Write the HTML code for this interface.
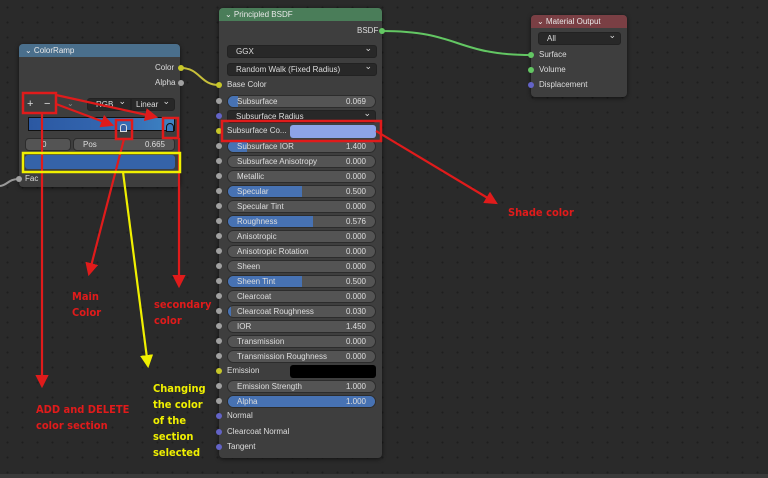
<!DOCTYPE html>
<html><head><meta charset="utf-8"><style>
*{margin:0;padding:0;box-sizing:border-box}
body{width:768px;height:478px;overflow:hidden;background:#282828;font-family:"Liberation Sans",sans-serif;font-size:8px;color:#ddd;position:relative;
background-image:radial-gradient(circle,#1e1e1e 0.8px,transparent 1.2px);background-size:15px 15px;background-color:#2a2a2a}
.a{position:absolute}
.node{position:absolute;background:#3e3e3e;border-radius:4px;box-shadow:0 1px 4px rgba(0,0,0,.6)}
.hd{position:absolute;left:0;right:0;top:0;height:13px;border-radius:4px 4px 0 0;padding-left:6px;line-height:13px;font-size:8px;color:#e8e8e8}
.f{position:absolute;height:13px;border-radius:7px;background:#545454;border:1px solid #2c2c2c;overflow:hidden;line-height:11px;font-size:8px;color:#ddd}
.f .fill{position:absolute;left:0;top:0;bottom:0;background:#4772b3}
.f .l{position:absolute;left:9px}
.f .r{position:absolute;right:9px}
.dd{position:absolute;height:13px;border-radius:3px;background:#282828;border:1px solid #222;line-height:11px;padding-left:8px;color:#ddd}
.dd:after{content:"⌄";position:absolute;right:4px;top:-3px;font-size:9px}
.s{position:absolute;width:6px;height:6px;border-radius:3px;background:#a1a1a1}
.t{position:absolute;color:#ddd;font-size:8px;line-height:10px}
.an{position:absolute;font-family:"DejaVu Sans Condensed","DejaVu Sans",sans-serif;font-stretch:condensed;font-weight:bold;font-size:11px;line-height:16px;color:#e01b1b}
</style></head><body>
<div class="a" style="left:0;top:474px;width:768px;height:4px;background:#3a3a3a"></div>

<svg class="a" style="left:0;top:0" width="768" height="478">
<path d="M181 68 C200 68,200 85,219 85" stroke="#c8c03a" stroke-width="2" fill="none"/>
<path d="M382 31 C460 31,455 55,531 55" stroke="#63c763" stroke-width="2" fill="none"/>
<path d="M19 179 C8 179,8 185,0 186" stroke="#999" stroke-width="2" fill="none"/>
</svg>

<!-- ColorRamp -->
<div class="node" style="left:19px;top:44px;width:161px;height:143px">
<div class="hd" style="background:#4a6f8c">⌄ ColorRamp</div>
</div>
<div class="t" style="left:155px;top:63px">Color</div>
<div class="t" style="left:155px;top:78px">Alpha</div>
<div class="s" style="left:178px;top:65px;background:#c7c729"></div>
<div class="s" style="left:178px;top:80px"></div>
<div class="t" style="left:27px;top:99px;font-size:11px">+</div>
<div class="t" style="left:44px;top:99px;font-size:11px">−</div>
<div class="t" style="left:67px;top:99px;color:#888">⌄</div>
<div class="dd" style="left:87px;top:98px;width:44px;border-radius:3px 0 0 3px">RGB</div>
<div class="dd" style="left:131px;top:98px;width:44px;border-radius:0 3px 3px 0;padding-left:4px">Linear</div>
<div class="a" style="left:28px;top:117px;width:147px;height:14px;background:linear-gradient(90deg,#2b58a2,#3468b1 60%,#3d84c4);border:1px solid #111"></div>
<div class="a" style="left:120px;top:124px;width:7px;height:8px;background:#3a5fa0;border:1px solid #ddd;border-radius:3px 3px 0 0"></div>
<div class="a" style="left:166px;top:123px;width:8px;height:9px;background:#3a7ac0;border:1px solid #111;border-radius:4px 4px 0 0"></div>
<div class="f" style="left:25px;top:138px;width:46px;border-radius:4px"><span class="l" style="left:16px">0</span></div>
<div class="f" style="left:73px;top:138px;width:102px;border-radius:4px"><span class="l">Pos</span><span class="r">0.665</span></div>
<div class="a" style="left:25px;top:155px;width:150px;height:14px;background:#3563a8;border-radius:3px"></div>
<div class="t" style="left:25px;top:174px">Fac</div>
<div class="s" style="left:16px;top:176px"></div>

<!-- Material output -->
<div class="node" style="left:531px;top:15px;width:96px;height:82px">
<div class="hd" style="background:#7a3f44">⌄ Material Output</div>
</div>
<div class="dd" style="left:538px;top:32px;width:83px">All</div>
<div class="t" style="left:539px;top:50px">Surface</div>
<div class="t" style="left:539px;top:65px">Volume</div>
<div class="t" style="left:539px;top:80px">Displacement</div>
<div class="s" style="left:528px;top:52px;background:#63c763"></div>
<div class="s" style="left:528px;top:67px;background:#63c763"></div>
<div class="s" style="left:528px;top:82px;background:#6363c7"></div>

<!-- BSDF -->
<div class="node" style="left:219px;top:8px;width:163px;height:450px">
<div class="hd" style="background:#4a7d59">⌄ Principled BSDF</div>
</div>
<div class="t" style="left:357px;top:26px">BSDF</div>
<div class="s" style="left:379px;top:28px;background:#63c763"></div>
<div class="dd" style="left:227px;top:45px;width:150px">GGX</div>
<div class="dd" style="left:227px;top:63px;width:150px">Random Walk (Fixed Radius)</div>
<div class="t" style="left:227px;top:80px">Base Color</div>
<div class="s" style="left:216px;top:82px;background:#c7c729"></div>

<div class="f" style="left:227px;top:95px;width:149px"><div class="fill" style="width:10px"></div><span class="l">Subsurface</span><span class="r">0.069</span></div>
<div class="dd" style="left:227px;top:110px;width:149px">Subsurface Radius</div>
<div class="t" style="left:227px;top:126px">Subsurface Co...</div>
<div class="a" style="left:290px;top:125px;width:86px;height:13px;background:#8da3e8;border-radius:3px"></div>
<div class="f" style="left:227px;top:140px;width:149px"><div class="fill" style="width:19px"></div><span class="l">Subsurface IOR</span><span class="r">1.400</span></div>
<div class="f" style="left:227px;top:155px;width:149px"><span class="l">Subsurface Anisotropy</span><span class="r">0.000</span></div>
<div class="f" style="left:227px;top:170px;width:149px"><span class="l">Metallic</span><span class="r">0.000</span></div>
<div class="f" style="left:227px;top:185px;width:149px"><div class="fill" style="width:74px"></div><span class="l">Specular</span><span class="r">0.500</span></div>
<div class="f" style="left:227px;top:200px;width:149px"><span class="l">Specular Tint</span><span class="r">0.000</span></div>
<div class="f" style="left:227px;top:215px;width:149px"><div class="fill" style="width:85px"></div><span class="l">Roughness</span><span class="r">0.576</span></div>
<div class="f" style="left:227px;top:230px;width:149px"><span class="l">Anisotropic</span><span class="r">0.000</span></div>
<div class="f" style="left:227px;top:245px;width:149px"><span class="l">Anisotropic Rotation</span><span class="r">0.000</span></div>
<div class="f" style="left:227px;top:260px;width:149px"><span class="l">Sheen</span><span class="r">0.000</span></div>
<div class="f" style="left:227px;top:275px;width:149px"><div class="fill" style="width:74px"></div><span class="l">Sheen Tint</span><span class="r">0.500</span></div>
<div class="f" style="left:227px;top:290px;width:149px"><span class="l">Clearcoat</span><span class="r">0.000</span></div>
<div class="f" style="left:227px;top:305px;width:149px"><div class="fill" style="width:3px"></div><span class="l">Clearcoat Roughness</span><span class="r">0.030</span></div>
<div class="f" style="left:227px;top:320px;width:149px"><span class="l">IOR</span><span class="r">1.450</span></div>
<div class="f" style="left:227px;top:335px;width:149px"><span class="l">Transmission</span><span class="r">0.000</span></div>
<div class="f" style="left:227px;top:350px;width:149px"><span class="l">Transmission Roughness</span><span class="r">0.000</span></div>
<div class="t" style="left:227px;top:366px">Emission</div>
<div class="a" style="left:290px;top:365px;width:86px;height:13px;background:#000;border-radius:3px"></div>
<div class="f" style="left:227px;top:380px;width:149px"><span class="l">Emission Strength</span><span class="r">1.000</span></div>
<div class="f" style="left:227px;top:395px;width:149px"><div class="fill" style="width:149px"></div><span class="l">Alpha</span><span class="r">1.000</span></div>
<div class="t" style="left:227px;top:411px">Normal</div>
<div class="t" style="left:227px;top:427px">Clearcoat Normal</div>
<div class="t" style="left:227px;top:442px">Tangent</div>

<div class="s" style="left:216px;top:98px"></div>
<div class="s" style="left:216px;top:113px;background:#6363c7"></div>
<div class="s" style="left:216px;top:128px;background:#c7c729"></div>
<div class="s" style="left:216px;top:143px"></div>
<div class="s" style="left:216px;top:158px"></div>
<div class="s" style="left:216px;top:173px"></div>
<div class="s" style="left:216px;top:188px"></div>
<div class="s" style="left:216px;top:203px"></div>
<div class="s" style="left:216px;top:218px"></div>
<div class="s" style="left:216px;top:233px"></div>
<div class="s" style="left:216px;top:248px"></div>
<div class="s" style="left:216px;top:263px"></div>
<div class="s" style="left:216px;top:278px"></div>
<div class="s" style="left:216px;top:293px"></div>
<div class="s" style="left:216px;top:308px"></div>
<div class="s" style="left:216px;top:323px"></div>
<div class="s" style="left:216px;top:338px"></div>
<div class="s" style="left:216px;top:353px"></div>
<div class="s" style="left:216px;top:368px;background:#c7c729"></div>
<div class="s" style="left:216px;top:383px"></div>
<div class="s" style="left:216px;top:398px"></div>
<div class="s" style="left:216px;top:413px;background:#6363c7"></div>
<div class="s" style="left:216px;top:429px;background:#6363c7"></div>
<div class="s" style="left:216px;top:444px;background:#6363c7"></div>

<!-- annotations -->
<svg class="a" style="left:0;top:0" width="768" height="478">
<defs>
<marker id="r" markerWidth="6" markerHeight="6" refX="5" refY="3" orient="auto" markerUnits="strokeWidth"><path d="M0,0 L6,3 L0,6z" fill="#e01b1b"/></marker>
<marker id="y" markerWidth="6" markerHeight="6" refX="5" refY="3" orient="auto" markerUnits="strokeWidth"><path d="M0,0 L6,3 L0,6z" fill="#f0f000"/></marker>
</defs>
<g stroke="#e01b1b" stroke-width="2.5" fill="none">
<rect x="23" y="93" width="33" height="20"/>
<rect x="116" y="120" width="16" height="19"/>
<rect x="163" y="118" width="15" height="20"/>
<rect x="222" y="121" width="159" height="20"/>
</g>
<g stroke="#e01b1b" stroke-width="2.2" fill="none">
<line x1="56" y1="104" x2="112" y2="125" marker-end="url(#r)"/>
<line x1="56" y1="95" x2="156" y2="117" marker-end="url(#r)"/>
<line x1="42" y1="113" x2="42" y2="386" marker-end="url(#r)"/>
<line x1="124" y1="139" x2="89" y2="274" marker-end="url(#r)"/>
<line x1="179" y1="138" x2="179" y2="286" marker-end="url(#r)"/>
<line x1="376" y1="131" x2="496" y2="203" marker-end="url(#r)"/>
</g>
<rect x="23" y="153" width="157" height="19" stroke="#f0f000" stroke-width="2.5" fill="none"/>
<line x1="123" y1="172" x2="148" y2="366" stroke="#f0f000" stroke-width="2.2" marker-end="url(#y)"/>
</svg>
<div class="an" style="left:72px;top:289px">Main<br>Color</div>
<div class="an" style="left:154px;top:297px">secondary<br>color</div>
<div class="an" style="left:36px;top:402px">ADD and DELETE<br>color section</div>
<div class="an" style="left:153px;top:381px;color:#f0f000">Changing<br>the color<br>of the<br>section<br>selected</div>
<div class="an" style="left:508px;top:205px">Shade color</div>
</body></html>
